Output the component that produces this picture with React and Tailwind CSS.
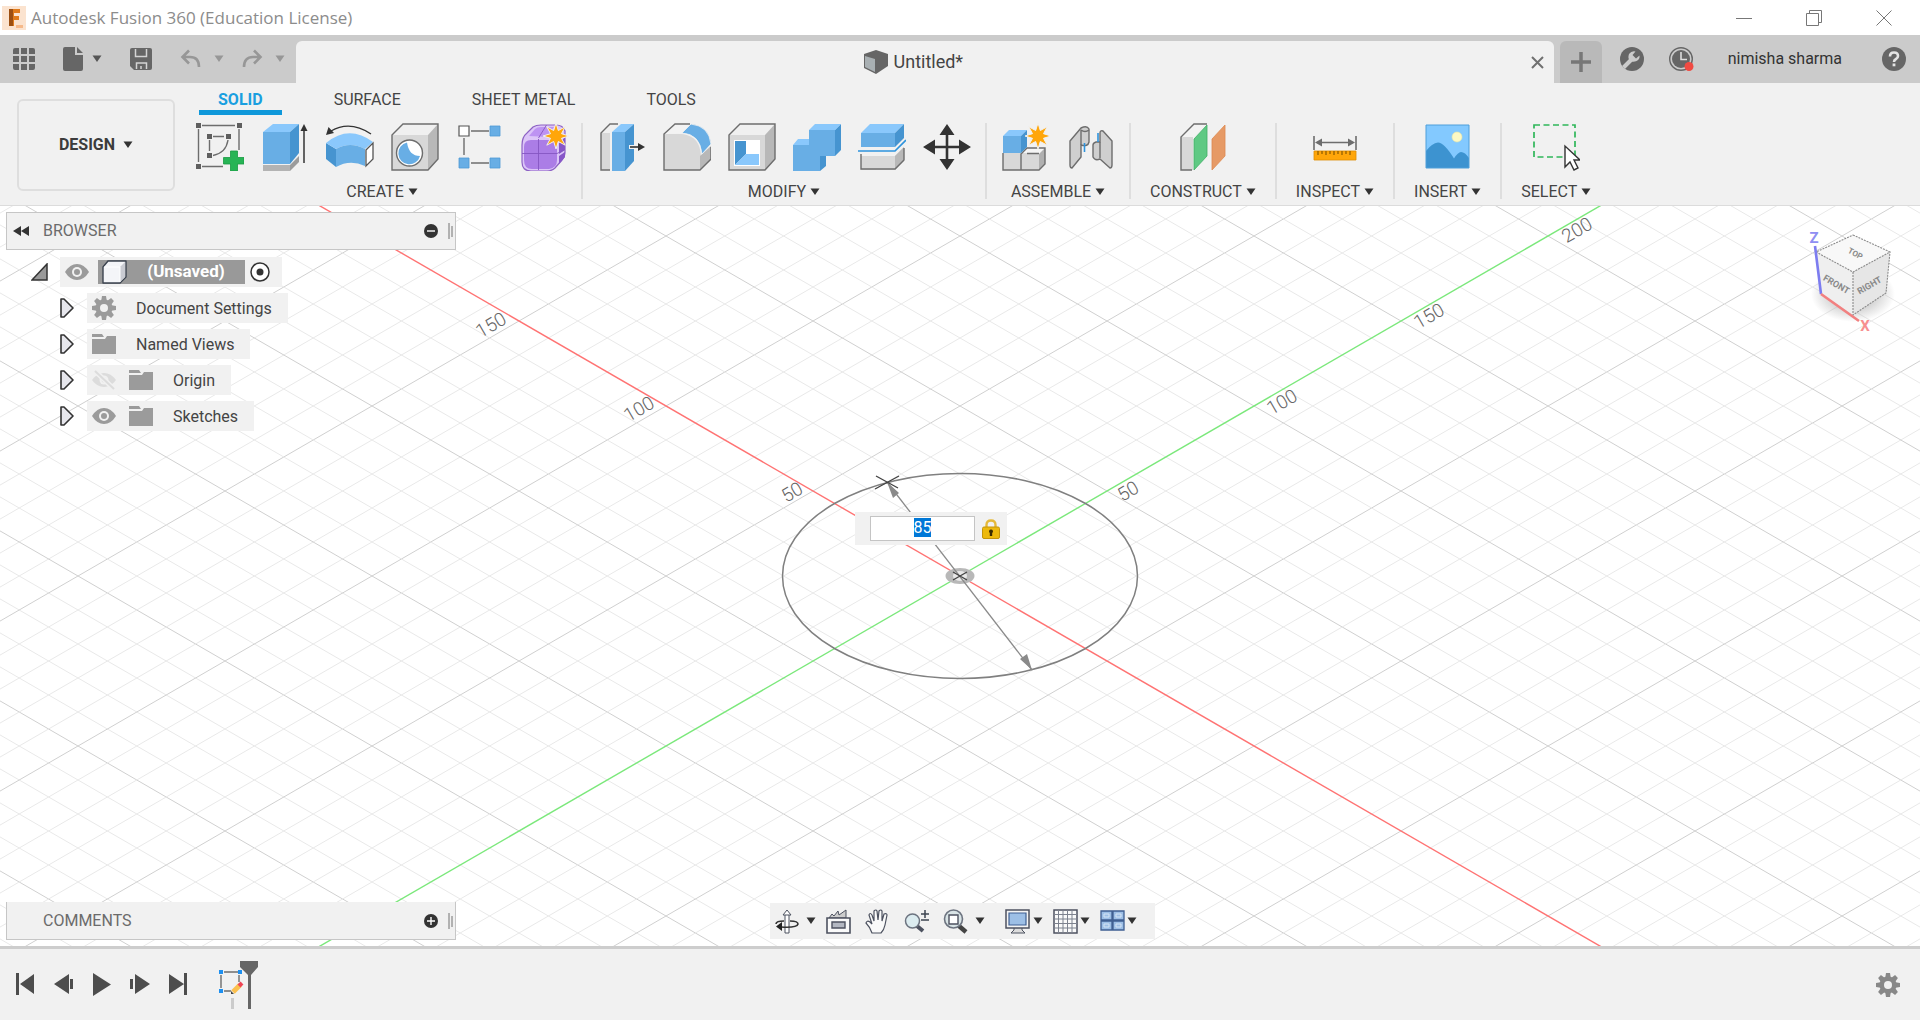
import { useEffect, useRef } from 'react';

const LIGHT = '#8ac8fc';
const MID = '#68aee5';
const DARK = '#4694d0';
const LINE = '#6d6d6d';

// ---------- small shared pieces ----------

function Caret({ className = 'text-[#333]' }) {
  return (
    <svg width="10" height="8" viewBox="0 0 10 8" className={className} aria-hidden="true">
      <path d="M0.500 0.500h9L5 7z" fill="currentColor" />
    </svg>
  );
}

function Art({ w = 48, h = 48, children }) {
  return (
    <svg width={w} height={h} viewBox={`0 0 ${w} ${h}`} fill="none" aria-hidden="true">
      {children}
    </svg>
  );
}

function starPoints(cx, cy, outer, inner) {
  const pts = [];
  for (let i = 0; i < 16; i++) {
    const r = i % 2 === 0 ? outer : inner;
    const a = (Math.PI / 8) * i - Math.PI / 2;
    pts.push(`${(cx + r * Math.cos(a)).toFixed(1)},${(cy + r * Math.sin(a)).toFixed(1)}`);
  }
  return pts.join(' ');
}

// ---------- ribbon icons ----------

function SketchIcon() {
  return (
    <Art>
      <g stroke={LINE} strokeWidth="1.4">
        <path d="M6 2.5h33M2.5 6v33M43 6v21M6 43.5h21M17 13.5h11M13.5 17v11M32 17Q30 30 17 32.500" />
      </g>
      <g fill="#5f5f5f">
        <path d="M0 0h5v5H0zM41 0h5v5h-5zM0 41h5v5H0zM11 11h5v5h-5zM30 11h5v5h-5zM11 30h5v5h-5z" />
      </g>
      <path d="M34.500 28h7v6.500H48v6.500h-6.500V48h-7v-7H27.500v-6.500h7z" fill="#27b455" stroke="#199a43" strokeWidth="0.8" />
    </Art>
  );
}

function ExtrudeIcon() {
  return (
    <Art>
      <path d="M2 42h27v6H2z" fill="#b3b3b3" />
      <path d="M29 42l9-9v6l-9 9z" fill="#9b9b9b" />
      <path d="M2 9L12 1h26l-9 8z" fill={LIGHT} />
      <path d="M2 9h27v32H2z" fill={MID} />
      <path d="M29 9l9-8v29l-9 11z" fill={DARK} />
      <path d="M43 40V6" stroke="#333" strokeWidth="1.5" />
      <path d="M43 1l3.500 7h-7z" fill="#333" />
    </Art>
  );
}

function RevolveIcon() {
  return (
    <Art>
      <path d="M45 11Q24-3 5 8" stroke="#333" strokeWidth="1.4" />
      <path d="M0 12L2.500 4l5.500 6z" fill="#333" />
      <path d="M0 20l10 6v18l-10-8z" fill={DARK} />
      <path d="M0 20Q23 1 47 19l-8 7Q24 18 10 26z" fill={LIGHT} />
      <path d="M10 26q14-8 29 0v17Q24 36 10 44z" fill={MID} />
      <path d="M40 27l7-7v16l-7 7z" fill="#fff" stroke="#555" strokeWidth="1.3" />
    </Art>
  );
}

function HoleIcon() {
  return (
    <Art>
      <path d="M1 12L12 1h35L37 12z" fill="#f0f0f0" />
      <path d="M1 12h36v35H1z" fill="#d8d8d8" />
      <path d="M37 12L47 1v35L37 47z" fill="#b8b8b8" />
      <path d="M1 12L12 1h35v35L37 47H1z" stroke={LINE} strokeWidth="1.4" />
      <circle cx="18.500" cy="30" r="13" fill="#fff" stroke={LINE} strokeWidth="1.4" />
      <path d="M16 19.500A11 11 0 1 0 29 33Q18 33 16 19.500z" fill={MID} />
    </Art>
  );
}

function PatternIcon() {
  return (
    <Art>
      <path d="M15 8h18M8 15v17M15 40h18" stroke={LINE} strokeWidth="1.4" />
      <path d="M3 3h10v10H3z" fill="#fff" stroke="#555" strokeWidth="1.2" />
      <path d="M34 3h10v10H34zM3 35h10v10H3zM34 35h10v10H34z" fill={MID} stroke="#4f9bd6" strokeWidth="0.8" />
    </Art>
  );
}

function FormIcon() {
  return (
    <Art>
      <path d="M1 22q0-8 5-12l6-6q3-2 8-2h15q7 0 9 6v22q0 4-3 7l-7 8q-3 3-8 3H10q-9 0-9-9z" fill="#dcc5f8" stroke="#8d62c4" strokeWidth="1.2" />
      <path d="M8 13l6-7q2-2 6-2h13l-6 10z" fill="#bd93f2" />
      <path d="M3 24q0-7 7-7h18q7 0 8 7v13q0 8-8 9H11q-8 0-8-9z" fill="#ab7de6" />
      <path d="M38 20l6-6v13l-6 4zM38 33l6-4v5l-6 7z" fill="#8757c8" />
      <path d="M1 30.500h35l8-4M17.500 16v31M17.500 15l8-13" stroke="#8456c2" strokeWidth="0.9" />
      <polygon points={starPoints(35, 13, 13, 6)} fill="#ffa60a" stroke="#f1f1f1" strokeWidth="1" />
    </Art>
  );
}

function PressPullIcon() {
  return (
    <Art>
      <path d="M3 10L12 1h11L13 10v37H3z" fill="#f0f0f0" />
      <path d="M3 10h9v37H3z" fill="#d8d8d8" />
      <path d="M20 1h-8L3 10v37h9" stroke={LINE} strokeWidth="1.4" />
      <path d="M14 9l9-8h13l-9 8z" fill={LIGHT} />
      <path d="M14 9h13v39H14z" fill={MID} />
      <path d="M27 9l9-8v37l-9 10z" fill={DARK} />
      <path d="M31 24h10" stroke="#f1f1f1" strokeWidth="4" />
      <path d="M32 24h9" stroke="#333" strokeWidth="1.6" />
      <path d="M47 24l-7-4v8z" fill="#333" />
    </Art>
  );
}

function FilletIcon() {
  return (
    <Art>
      <path d="M1 11L12 1h15l-8 9z" fill="#f3f3f3" />
      <path d="M1 11h18q18 2 19 22v14H1z" fill="#d8d8d8" />
      <path d="M37 33l11-10v14L37 47z" fill="#b8b8b8" />
      <path d="M27 1H12L1 11v36h36l11-11V24" stroke={LINE} strokeWidth="1.4" />
      <path d="M19 10l9-9q18 2 20 20l-9 10Q37 11 19 10z" fill={MID} stroke="#f1f1f1" strokeWidth="0.8" />
    </Art>
  );
}

function ShellIcon() {
  return (
    <Art>
      <path d="M1 12L12 1h35L37 12z" fill="#f0f0f0" />
      <path d="M1 12h36v35H1z" fill="#d8d8d8" />
      <path d="M37 12L47 1v35L37 47z" fill="#b8b8b8" />
      <path d="M1 12L12 1h35v35L37 47H1z" stroke={LINE} strokeWidth="1.4" />
      <path d="M6 17h26v26H6z" fill="#fff" />
      <path d="M7 18h11v13L7 42z" fill={DARK} />
      <path d="M18 31h13v11H7z" fill={LIGHT} />
    </Art>
  );
}

function CombineIcon() {
  return (
    <Art>
      <path d="M0 22l5-6h13L27 1h21l-6 6H16v15z" fill={LIGHT} />
      <path d="M0 22h16V7h26v26H27v15H0z" fill={MID} />
      <path d="M42 7l6-6v26l-6 6zM27 33h6v10l-6 5z" fill={DARK} />
      <path d="M16 7l6-6h26l-6 6z" fill={LIGHT} />
    </Art>
  );
}

function SplitIcon() {
  return (
    <Art>
      <path d="M3 33h34l9-9v14l-9 9H3z" fill="#d8d8d8" />
      <path d="M37 33l9-9v14l-9 9z" fill="#b8b8b8" />
      <path d="M3 31v15h34l9-9V25" stroke={LINE} strokeWidth="1.4" />
      <path d="M3 10l9-9h34l-9 9z" fill={LIGHT} />
      <path d="M3 10h34v14H3z" fill={MID} />
      <path d="M37 10l9-9v14l-9 9z" fill={DARK} />
      <path d="M0 28h37l11-11" stroke="#f1f1f1" strokeWidth="4" />
      <path d="M0 28h37l11-11" stroke="#2d93dd" strokeWidth="1.7" />
    </Art>
  );
}

function MoveIcon() {
  return (
    <Art>
      <path d="M24 6v36M6 24h36" stroke="#333" strokeWidth="2.6" />
      <path d="M24 1l7.500 11h-15zM24 47l7.500-11h-15zM0 24l12-7.500v15zM48 24l-12-7.500v15z" fill="#333" />
    </Art>
  );
}

function ComponentIcon() {
  return (
    <Art>
      <path d="M19 31l6-6h18l-6 6z" fill="#f5f5f5" />
      <path d="M1 30h36v17H1z" fill="#d8d8d8" />
      <path d="M37 31l6-6v16l-6 6z" fill="#b0b0b0" />
      <path d="M1 30v17h36l6-6V25H25l-6 6v16M25 30.500h12" stroke={LINE} strokeWidth="1.4" />
      <path d="M1 13l6-6h18l-6 6z" fill={LIGHT} />
      <path d="M1 13h18v17H1z" fill={MID} />
      <path d="M19 13l6-6v17l-6 6z" fill={DARK} />
      <polygon points={starPoints(36, 13, 13, 6)} fill="#ffa60a" stroke="#f1f1f1" strokeWidth="1" />
    </Art>
  );
}

function JointIcon() {
  return (
    <Art>
      <g stroke={LINE} strokeWidth="1.4" strokeLinejoin="round">
        <path d="M3 18L14 5q6-3 8 1v13q-1 5-8 3v12L5 45q-2 0-2-3z" fill="#cfcfcf" />
        <path d="M14 7v15M14 7q4 3 8 0" />
        <path d="M45 18L36 8q-3-1-3 2v9h-4q-3 1-3 3v12q2 4 7 2l10 9q2 0 2-3z" fill="#cfcfcf" />
        <path d="M33 19v16" />
      </g>
      <path d="M17.500 20v9M31 10v9" stroke="#2d93dd" strokeWidth="1.6" />
    </Art>
  );
}

function PlaneIcon() {
  return (
    <Art>
      <path d="M2 13L15 1h12L15 14v33H2z" fill="#f3f3f3" />
      <path d="M2 14h12v33H2z" fill="#d8d8d8" />
      <path d="M28 1H15L2 14v33h11" stroke={LINE} strokeWidth="1.4" />
      <path d="M15 16L28 2v31L15 47z" fill="#5fc983" stroke="#3fae66" strokeWidth="0.8" />
      <path d="M33 16L46 2v31L33 47z" fill="#e69a66" stroke="#dd8950" strokeWidth="0.8" />
    </Art>
  );
}

function MeasureIcon() {
  return (
    <Art>
      <path d="M3 13v14M45 13v14M6 19.500h36" stroke={LINE} strokeWidth="1.6" />
      <path d="M4 19.500l7-4v8zM44 19.500l-7-4v8z" fill={LINE} />
      <path d="M3 28h42v9H3z" fill="#ffa60a" stroke="#e08e00" strokeWidth="0.8" />
      <path d="M7 28v4M11 28v3M15 28v4M19 28v3M23 28v4M27 28v3M31 28v4M35 28v3M39 28v4" stroke="#8a5a00" strokeWidth="1.2" />
    </Art>
  );
}

function ImageIcon() {
  return (
    <Art>
      <path d="M2 2h43v43H2z" fill="#83c9ff" />
      <path d="M2 28Q8 20 14 19.500q6 0 16 16Q34 29 37 29q4 0 8 6v10H2z" fill="#3d93d0" />
      <circle cx="33" cy="14" r="5" fill="#fdf9c4" stroke="#e8e6a8" strokeWidth="0.6" />
      <path d="M2 2h43v43H2z" stroke="#4f9fda" strokeWidth="1" />
    </Art>
  );
}

function SelectIcon() {
  return (
    <Art>
      <path d="M2 2h41v32H2z" stroke="#2fb75a" strokeWidth="1.7" strokeDasharray="6 3.500" />
      <path d="M33 23v21l5-5 4 8 4-2-4-8h6z" fill="#fff" stroke="#333" strokeWidth="1.4" />
    </Art>
  );
}

// ---------- header ----------

function TitleBar() {
  return (
    <header className="flex h-[35px] shrink-0 items-center justify-between bg-white pl-[2px] pr-[28px]">
      <div className="flex items-center gap-[5px]">
        <svg width="24" height="24" viewBox="0 0 24 24" aria-hidden="true">
          <path d="M0 0h24v24H0z" fill="#fbe3cf" />
          <path d="M7 3h11v4h-6v3h5v4h-5v6H7z" fill="#e07b1c" />
          <path d="M7 3h4v17H7z" fill="#9c4f12" />
          <path d="M14 19h7v3h-7z" fill="#f5b98a" />
        </svg>
        <h1 className="font-['Open_Sans',sans-serif] text-[17px] leading-6 text-[#8c8c8c]">
          Autodesk Fusion 360 (Education License)
        </h1>
      </div>
      <div className="flex items-center gap-[54px] text-[#777]">
        <button aria-label="Minimize">
          <svg width="16" height="16" viewBox="0 0 16 16" stroke="currentColor"><path d="M0 8.500h16" /></svg>
        </button>
        <button aria-label="Restore">
          <svg width="16" height="16" viewBox="0 0 16 16" fill="none" stroke="currentColor">
            <path d="M.5 3.500h12v12H.5zM3.500 3.500v-3h12v12h-3" />
          </svg>
        </button>
        <button aria-label="Close">
          <svg width="16" height="16" viewBox="0 0 16 16" stroke="currentColor"><path d="M.5.5l15 15M15.500.5l-15 15" /></svg>
        </button>
      </div>
    </header>
  );
}

function TabStrip() {
  return (
    <div className="flex h-12 shrink-0 items-end bg-[#cbcbcb] pr-[14px]">
      <div className="flex h-12 w-[296px] shrink-0 items-center pl-[13px] text-[#666]">
        <button aria-label="Data panel">
          <svg width="22" height="22" viewBox="0 0 22 22" fill="currentColor" aria-hidden="true">
            <path d="M2 0h4v6H0V2q0-2 2-2zM8 0h6v6H8zM16 0h4q2 0 2 2v4h-6zM0 8h6v6H0zM8 8h6v6H8zM16 8h6v6h-6zM0 16h6v6H2q-2 0-2-2zM8 16h6v6H8zM16 16h6v4q0 2-2 2h-4z" />
          </svg>
        </button>
        <button aria-label="File" className="ml-7 flex items-center gap-[9px]">
          <svg width="20" height="24" viewBox="0 0 20 24" fill="currentColor" aria-hidden="true">
            <path d="M2 0h10v8h8v14q0 2-2 2H2q-2 0-2-2V2q0-2 2-2zM14 0l6 6h-6z" />
          </svg>
          <Caret className="text-[#555]" />
        </button>
        <button aria-label="Save" className="ml-7">
          <svg width="22" height="22" viewBox="0 0 22 22" aria-hidden="true">
            <path d="M2 0h18q2 0 2 2v18q0 2-2 2H4l-4-4V2q0-2 2-2z" fill="currentColor" />
            <path d="M5.500 1v7.500h11V1M6.500 21v-6h10v6M11 18v3" fill="none" stroke="#d4d4d4" strokeWidth="1.500" />
          </svg>
        </button>
        <button aria-label="Undo" className="ml-7 flex items-center gap-[13px] text-[#979797]">
          <svg width="21" height="20" viewBox="0 0 21 20" fill="none" stroke="currentColor" strokeWidth="2.600" aria-hidden="true">
            <path d="M9 1.500L2.500 8 9 14.500M3 8h7q9 0 9 10" />
          </svg>
          <Caret className="text-[#979797]" />
        </button>
        <button aria-label="Redo" className="ml-[18px] flex items-center gap-3 text-[#979797]">
          <svg width="21" height="20" viewBox="0 0 21 20" fill="none" stroke="currentColor" strokeWidth="2.600" aria-hidden="true">
            <path d="M12 1.500L18.500 8 12 14.500M18 8h-7Q2 8 2 18" />
          </svg>
          <Caret className="text-[#979797]" />
        </button>
      </div>
      <div className="flex h-[42px] flex-1 items-center rounded-t-md bg-[#f1f1f1] pr-[10px]">
        <div className="flex flex-1 items-center justify-center gap-[6px]">
          <svg width="24" height="24" viewBox="0 0 24 24" aria-hidden="true">
            <path d="M0 4l12-4 12 4v12l-12 8L0 18z" fill="#666" />
            <path d="M1 6l10 3v13L1 17z" fill="#a9b0b3" />
          </svg>
          <span className="text-lg text-[#444]">Untitled*</span>
        </div>
        <button aria-label="Close tab" className="text-[#707070]">
          <svg width="13" height="13" viewBox="0 0 13 13" stroke="currentColor" strokeWidth="2"><path d="M1 1l11 11M12 1L1 12" /></svg>
        </button>
      </div>
      <button aria-label="New tab" className="ml-[6px] flex h-[42px] w-[42px] items-center justify-center rounded-t-md bg-[#b9b9b9] text-[#777]">
        <svg width="20" height="20" viewBox="0 0 20 20" stroke="currentColor" strokeWidth="3.500"><path d="M10 0v20M0 10h20" /></svg>
      </button>
      <div className="flex h-12 items-center pl-[18px]">
        <button aria-label="Extensions">
          <svg width="24" height="24" viewBox="0 0 24 24" aria-hidden="true">
            <circle cx="12" cy="12" r="12" fill="#666" />
            <path d="M3.500 20.500l8-8" stroke="#cbcbcb" strokeWidth="4" />
            <path d="M19.500 8.500L16 11.500l-3.500-3.500L15.500 4.500q-4-1-6.500 2.500-1.500 4 .8 6.800 3.200 1.800 6.800 .2 3.500-2 2.900-5.500z" fill="#cbcbcb" />
          </svg>
        </button>
        <button aria-label="Job status" className="ml-[25px]">
          <svg width="25" height="24" viewBox="0 0 25 24" aria-hidden="true">
            <circle cx="12" cy="12" r="11.300" fill="none" stroke="#666" strokeWidth="1.400" />
            <circle cx="12" cy="12" r="9" fill="#666" />
            <path d="M12 5v7.500h6" fill="none" stroke="#ddd" strokeWidth="1.600" />
            <circle cx="20" cy="19.500" r="4.500" fill="#f04a42" />
          </svg>
        </button>
        <button className="ml-[34px] text-base leading-5 text-[#333]">nimisha sharma</button>
        <button aria-label="Help" className="ml-10">
          <svg width="24" height="24" viewBox="0 0 24 24" aria-hidden="true">
            <circle cx="12" cy="12" r="12" fill="#666" />
            <path d="M8 9.500q0-4 4-4t4 3.500q0 2-2 3t-2 3" fill="none" stroke="#e4e4e4" strokeWidth="2.600" />
            <path d="M10.600 16.500h2.800v2.800h-2.800z" fill="#e4e4e4" />
          </svg>
        </button>
      </div>
    </div>
  );
}

// ---------- ribbon ----------

const ribbonTabs = ['SOLID', 'SURFACE', 'SHEET METAL', 'TOOLS'];

const groups = [
  {
    label: 'CREATE',
    tools: [
      ['Create Sketch', SketchIcon],
      ['Extrude', ExtrudeIcon],
      ['Revolve', RevolveIcon],
      ['Hole', HoleIcon],
      ['Pattern', PatternIcon],
      ['Create Form', FormIcon],
    ],
  },
  {
    label: 'MODIFY',
    tools: [
      ['Press Pull', PressPullIcon],
      ['Fillet', FilletIcon],
      ['Shell', ShellIcon],
      ['Combine', CombineIcon],
      ['Split Body', SplitIcon],
      ['Move', MoveIcon],
    ],
  },
  {
    label: 'ASSEMBLE',
    tools: [
      ['New Component', ComponentIcon],
      ['Joint', JointIcon],
    ],
  },
  { label: 'CONSTRUCT', tools: [['Offset Plane', PlaneIcon]] },
  { label: 'INSPECT', tools: [['Measure', MeasureIcon]] },
  { label: 'INSERT', tools: [['Insert Image', ImageIcon]] },
  { label: 'SELECT', tools: [['Select', SelectIcon]] },
];

function RibbonGroup({ label, tools }) {
  const single = tools.length === 1;
  return (
    <section
      aria-label={label}
      className={`flex h-[76px] flex-col items-center border-r-2 border-[#dedede] last:border-r-0 ${single ? 'px-[19px]' : 'px-[6px] first:pr-1 first:pl-0'}`}
    >
      <div className="flex">
        {tools.map(([name, Icon]) => (
          <button key={name} aria-label={name} className="flex h-12 w-[65px] items-center justify-center">
            <Icon />
          </button>
        ))}
      </div>
      <button className="mt-[11px] flex items-center gap-1 text-base leading-5 text-[#444]">
        {label}
        <Caret />
      </button>
    </section>
  );
}

function Ribbon() {
  return (
    <div className="flex shrink-0 items-start border-b border-[#dcdcdc] bg-[#f1f1f1] pl-[17px]">
      <button className="mt-4 flex h-[92px] w-[158px] shrink-0 items-center justify-center gap-2 rounded-md border-2 border-[#dedede] text-base font-bold text-[#3c3c3c]">
        DESIGN
        <Caret />
      </button>
      <div className="ml-3">
        <nav className="flex gap-[33px] pl-3">
          {ribbonTabs.map((tab, i) => (
            <button
              key={tab}
              className={`border-b-[5px] px-[19px] pt-[7px] text-base leading-5 ${
                i === 0 ? 'border-[#0f98da] font-bold text-[#1a9fe0]' : 'border-transparent text-[#444]'
              }`}
            >
              {tab}
            </button>
          ))}
        </nav>
        <div className="mt-2 mb-[6px] flex">
          {groups.map((g) => (
            <RibbonGroup key={g.label} {...g} />
          ))}
        </div>
      </div>
    </div>
  );
}

// ---------- modelling canvas ----------

// one 10 mm cell of the isometric floor, in screen units
const CELL_X = 29.4;
const CELL_Y = 17;

function GridLines() {
  const lines = [];
  for (let i = -56; i <= 56; i++) {
    if (i === 0) continue;
    const stroke = i % 5 === 0 ? '#d0d0d0' : '#e9e9e9';
    const x = i * CELL_X;
    const y = i * CELL_Y;
    lines.push(
      <line key={`a${i}`} x1={x - 60 * CELL_X} y1={-y - 60 * CELL_Y} x2={x + 60 * CELL_X} y2={-y + 60 * CELL_Y} stroke={stroke} />,
      <line key={`b${i}`} x1={x - 60 * CELL_X} y1={y + 60 * CELL_Y} x2={x + 60 * CELL_X} y2={y - 60 * CELL_Y} stroke={stroke} />,
    );
  }
  return <g strokeWidth="1">{lines}</g>;
}

const axisLabels = [
  [168, -85, '50'],
  [322, -174, '100'],
  [469, -260, '150'],
  [617, -346, '200'],
  [-168, -84, '50'],
  [-321, -167, '100'],
  [-469, -251, '150'],
];

function Floor() {
  return (
    <svg
      className="absolute inset-0 h-full w-full"
      viewBox="-960 -370 1920 740"
      preserveAspectRatio="xMidYMid slice"
      aria-hidden="true"
    >
      <GridLines />
      <line x1="-1176" y1="-680" x2="1176" y2="680" stroke="#ff7373" strokeWidth="1.400" />
      <line x1="-1176" y1="680" x2="1176" y2="-680" stroke="#7be87b" strokeWidth="1.400" />
      <g className="font-light" fontSize="19" fill="#666" textAnchor="middle">
        {axisLabels.map(([x, y, text]) => (
          <text key={`${x}`} transform={`translate(${x} ${y}) rotate(-30)`} dominantBaseline="central">
            {text}
          </text>
        ))}
      </g>
      <ellipse cx="0" cy="0" rx="177.500" ry="102.500" fill="none" stroke="#808080" strokeWidth="1.500" />
      <ellipse cx="0" cy="0" rx="14.500" ry="8" fill="#b8b8b8" />
      <ellipse cx="0" cy="0" rx="7" ry="5" fill="#e9e9e9" />
      <path d="M-73-94L72 94" stroke="#8a8a8a" strokeWidth="1.300" />
      <path d="M-73-94l12 11-6 5zM72 94L60 83l7-5z" fill="#8a8a8a" />
      <path d="M-84-100l22 12M-61-100l-24 13M-7-4L7 4M-7 4L7-4" stroke="#444" strokeWidth="1.400" />
    </svg>
  );
}

function DimensionInput() {
  const ref = useRef(null);

  useEffect(() => {
    ref.current.focus();
    ref.current.select();
  }, []);

  return (
    <div className="absolute top-1/2 left-1/2 -mt-16 -ml-[105px] flex items-center gap-[7px] bg-[#f1f1f1] py-1 pr-[7px] pl-[15px]">
      <input
        ref={ref}
        aria-label="Diameter"
        defaultValue="85"
        className="h-[25px] w-[105px] border border-[#c4c4c4] bg-white pb-[2px] text-center text-base text-[#333] outline-none selection:bg-[#0078d7] selection:text-white"
      />
      <svg width="18" height="20" viewBox="0 0 18 20" aria-hidden="true">
        <path d="M4.500 9V6q0-4.500 4.500-4.500T13.500 6v3" fill="none" stroke="#e5b93a" strokeWidth="2.400" />
        <rect x="0.500" y="8" width="17" height="11.500" rx="1.500" fill="#edb90c" stroke="#c4950a" />
        <path d="M9 10.500a2 2 0 0 1 1.200 3.600V17H7.800v-2.900A2 2 0 0 1 9 10.500z" fill="#3a2b00" />
      </svg>
    </div>
  );
}

function ViewCube() {
  return (
    <svg className="absolute top-4 right-5 h-[124px] w-[100px]" viewBox="0 0 100 124" aria-label="View cube">
      <defs>
        <radialGradient id="cubeShadow">
          <stop offset="0.400" stopColor="#999" stopOpacity="0.550" />
          <stop offset="1" stopColor="#999" stopOpacity="0" />
        </radialGradient>
      </defs>
      <ellipse cx="53" cy="72" rx="42" ry="28" fill="url(#cubeShadow)" />
      <path d="M53 13l37 17-37 20-37-20z" fill="#f8f8f8" />
      <path d="M16 30l37 20v43L21 72z" fill="#efefef" />
      <path d="M90 30L53 50v43l33-22z" fill="#e6e6e6" />
      <path d="M53 13l37 17-37 20-37-20zM53 50v43l33-22 4-41" fill="none" stroke="#8a8a8a" strokeWidth="1.100" strokeDasharray="2 1" />
      <path d="M15 24l6 48" stroke="#7c7cf0" strokeWidth="2.600" />
      <path d="M21 72l38 27" stroke="#f28080" strokeWidth="2.600" />
      <g fontWeight="bold" fill="#8a8a8a" textAnchor="middle">
        <text fontSize="8" transform="translate(54 34) rotate(28)">TOP</text>
        <text fontSize="9" transform="translate(35 65) rotate(30)">FRONT</text>
        <text fontSize="9" transform="translate(71 66) rotate(-30)">RIGHT</text>
      </g>
      <text x="14" y="21" fontSize="15" fontWeight="bold" fill="#8f8ff2" textAnchor="middle">Z</text>
      <text x="65" y="109" fontSize="15" fontWeight="bold" fill="#f78f8f" textAnchor="middle">X</text>
    </svg>
  );
}

// ---------- browser tree ----------

function EyeIcon() {
  return (
    <svg width="24" height="16" viewBox="0 0 24 16" aria-hidden="true">
      <path d="M0 8Q5 0 12 0t12 8q-5 8-12 8T0 8z" fill="#9b9b9b" />
      <circle cx="12" cy="8" r="5" fill="#f1f1f1" />
      <circle cx="12" cy="8" r="3" fill="#9b9b9b" />
    </svg>
  );
}

function HiddenEyeIcon() {
  return (
    <svg width="24" height="20" viewBox="0 0 24 20" aria-hidden="true">
      <path d="M0 10Q5 3 12 3t12 7q-5 7-12 7T0 10z" fill="#dcdcdc" />
      <circle cx="12" cy="10" r="4.500" fill="#f1f1f1" />
      <circle cx="12" cy="10" r="2.500" fill="#dcdcdc" />
      <path d="M3 1l19 18" stroke="#f1f1f1" strokeWidth="5" />
      <path d="M3 1l19 18" stroke="#dcdcdc" strokeWidth="2" />
    </svg>
  );
}

function FolderIcon() {
  return (
    <svg width="24" height="20" viewBox="0 0 24 20" aria-hidden="true">
      <path d="M0 0h10l2 3H0zM0 5h13l2-3h9v18H0z" fill="#9b9b9b" />
    </svg>
  );
}

function GearIcon({ color = '#9b9b9b' }) {
  return (
    <svg width="24" height="24" viewBox="0 0 24 24" aria-hidden="true">
      <g fill={color}>
        {[0, 45, 90, 135].map((deg) => (
          <path key={deg} d="M10 0h4l1 6v12l-1 6h-4l-1-6V6z" transform={`rotate(${deg} 12 12)`} />
        ))}
        <circle cx="12" cy="12" r="8.500" />
      </g>
      <circle cx="12" cy="12" r="4" fill="#f1f1f1" />
    </svg>
  );
}

function ExpandIcon() {
  return (
    <svg width="14" height="20" viewBox="0 0 14 20" aria-hidden="true">
      <path d="M1 1h3l9 9-9 9H1z" fill="#e6e6ec" stroke="#333" strokeWidth="1.600" strokeLinejoin="round" />
    </svg>
  );
}

const treeRows = [
  { name: 'Document Settings', icons: [GearIcon] },
  { name: 'Named Views', icons: [FolderIcon] },
  { name: 'Origin', icons: [HiddenEyeIcon, FolderIcon] },
  { name: 'Sketches', icons: [EyeIcon, FolderIcon] },
];

function PanelHeader({ title, lead, sign, className }) {
  return (
    <div className={`flex h-[38px] items-center border-[#c6c6c6] bg-[#f1f1f1] pr-[2px] pl-[6px] ${className}`}>
      <span className="flex w-[30px]">{lead}</span>
      <h2 className="flex-1 text-base leading-5 text-[#6b6b6b]">{title}</h2>
      <button aria-label={`Toggle ${title.toLowerCase()}`}>
        <svg width="14" height="14" viewBox="0 0 14 14" aria-hidden="true">
          <circle cx="7" cy="7" r="7" fill="#333" />
          <path d={sign} stroke="#fff" strokeWidth="1.400" />
        </svg>
      </button>
      <svg className="ml-[10px]" width="5" height="18" viewBox="0 0 5 18" aria-hidden="true">
        <path d="M1 1v16M4 4v11" stroke="#888" strokeWidth="1.200" />
      </svg>
    </div>
  );
}

function Browser() {
  return (
    <aside className="absolute top-[6px] left-[6px] w-[450px]">
      <PanelHeader
        title="BROWSER"
        className="border"
        sign="M3 7h8"
        lead={
          <svg width="16" height="10" viewBox="0 0 16 10" aria-hidden="true">
            <path d="M8 0v10L0 5zM16 0v10L8 5z" fill="#333" />
          </svg>
        }
      />
      <ul className="mt-[7px] flex flex-col gap-[6px]">
        <li className="flex h-[30px] items-center gap-3 pl-[25px]">
          <svg width="17" height="18" viewBox="0 0 17 18" aria-hidden="true">
            <path d="M1 17L16 1v16z" fill="#999" stroke="#333" strokeWidth="1.500" />
          </svg>
          <div className="flex h-[30px] items-center bg-[#f1f1f1] pr-3 pl-[5px]">
            <EyeIcon />
            <button className="mr-[5px] ml-[9px] flex h-6 w-[147px] items-center bg-[#999] pl-1 text-[17px] font-bold text-white">
              <svg width="25" height="24" viewBox="0 0 25 24" aria-hidden="true">
                <path d="M1 7l5-6h18v16l-6 6H1z" fill="#f4f5f8" stroke="#3d4450" strokeWidth="1.400" strokeLinejoin="round" />
                <path d="M18 7l5-5v15l-5 5z" fill="#c9cbd2" />
                <path d="M2 7h16v15" fill="none" stroke="#fff" />
              </svg>
              <span className="flex-1 text-center">(Unsaved)</span>
            </button>
            <svg width="20" height="20" viewBox="0 0 20 20" aria-hidden="true">
              <circle cx="10" cy="10" r="9" fill="#fff" stroke="#333" strokeWidth="1.500" />
              <circle cx="10" cy="10" r="3.500" fill="#333" />
            </svg>
          </div>
        </li>
        {treeRows.map(({ name, icons }) => (
          <li key={name} className="flex h-[30px] items-center pl-[54px]">
            <button aria-label={`Expand ${name}`}>
              <ExpandIcon />
            </button>
            <div className="ml-[13px] flex h-[30px] items-center gap-[13px] bg-[#f1f1f1] pr-4 pl-[5px]">
              {icons.map((Icon, i) => (
                <Icon key={i} />
              ))}
              <span className="pt-px pl-[7px] text-base text-[#444]">{name}</span>
            </div>
          </li>
        ))}
      </ul>
    </aside>
  );
}

// ---------- navigation bar ----------

const navTools = [
  {
    name: 'Orbit',
    menu: 'ml-[7px]',
    art: (
      <>
        <path d="M11 5h4v19h-4z" fill="#fff" stroke="#4d5260" />
        <path d="M9 6l4-5 4 5z" stroke="#4d5260" fill="#fff" />
        <path d="M10 12Q2 12 2 15M16 12q8 0 8 3-1 4-17 3" fill="none" stroke="#333" strokeWidth="1.600" />
        <path d="M8 13v9l-6-4.500z" fill="#222" />
      </>
    ),
  },
  {
    name: 'Look At',
    gap: 'mr-1',
    art: (
      <>
        <path d="M3 9l3-4 2 2 4-5 1 4 7-5v8z" fill="#ccc" stroke="#4d5260" />
        <path d="M1 9h23v15H1z" fill="#fafafa" stroke="#4d5260" strokeWidth="1.600" />
        <path d="M6 13h13v6H6z" fill="#b4b8c2" stroke="#4d5260" strokeWidth="1.400" />
      </>
    ),
  },
  {
    name: 'Pan',
    gap: 'mr-1',
    art: (
      <path
        d="M7 24Q5 18 1 14q1-3 4-1l2 2-3-9q1-3 3 0l2 6V2q2-2 3 0l1 9 1-9q2-2 3 0v10l2-7q3-1 3 1l-2 10q-1 5-4 8z"
        fill="#fafafa"
        stroke="#4d5260"
        strokeWidth="1.200"
      />
    ),
  },
  {
    name: 'Zoom',
    gap: 'mr-1',
    art: (
      <>
        <path d="M13 17l6 5" stroke="#4d5260" strokeWidth="4" />
        <circle cx="8.500" cy="12" r="7" fill="#dcecf0" stroke="#6d7480" strokeWidth="1.500" />
        <path d="M17 5h8M21 1v8M17 11h8" stroke="#3d4450" strokeWidth="1.500" />
      </>
    ),
  },
  {
    name: 'Fit',
    menu: 'ml-[7px]',
    gap: 'mr-[10px]',
    art: (
      <>
        <path d="M16 17l7 6" stroke="#444" strokeWidth="4.500" />
        <circle cx="10.500" cy="10" r="9" fill="#d9e4e6" stroke="#6d7480" strokeWidth="1.600" />
        <path d="M6 6h9v9H6z" fill="#fff" stroke="#4d5260" strokeWidth="1.400" />
      </>
    ),
  },
  {
    name: 'Display Settings',
    menu: 'ml-[3px]',
    art: (
      <>
        <path d="M9 18h8v3l3 3H6l3-3z" fill="#ddd" stroke="#4d5260" />
        <path d="M1 1h23v18H1z" fill="#f4f4f4" stroke="#4d5260" strokeWidth="1.500" />
        <path d="M4 4h17v12H4z" fill="#9dbfe6" stroke="#3f5f92" strokeWidth="1.200" />
      </>
    ),
  },
  {
    name: 'Grid and Snaps',
    menu: 'ml-[2px]',
    art: (
      <>
        <path d="M1 1h23v23H1z" fill="#fafafa" stroke="#4d5260" strokeWidth="1.500" />
        <path d="M5.500 1v23M10 1v23M14.500 1v23M19 1v23M1 5.500h23M1 10h23M1 14.500h23M1 19h23" stroke="#7d828e" />
      </>
    ),
  },
  {
    name: 'Viewports',
    menu: 'ml-[2px]',
    art: (
      <>
        <path d="M1 2h11v9H1zM13 2h11v9H13zM1 12h11v9H1zM13 12h11v9H13z" fill="#9dbfe6" stroke="#3f5f92" strokeWidth="1.300" />
        <path d="M4 5h5v3H4zM16 5h5v3h-5zM4 15h5v3H4zM16 15h5v3h-5z" stroke="#d5e4f5" fill="none" />
      </>
    ),
  },
];

function NavBar() {
  return (
    <div className="absolute bottom-[7px] left-1/2 -ml-[190px] flex h-9 items-center gap-[10px] bg-[#f1f1f1] pr-[18px] pl-1">
      {navTools.map(({ name, menu, gap = '', art }) => (
        <button key={name} aria-label={name} className={`flex items-center ${gap}`}>
          <svg width="25" height="25" viewBox="0 0 25 25" aria-hidden="true">{art}</svg>
          {menu && (
            <span className={menu}>
              <Caret />
            </span>
          )}
        </button>
      ))}
    </div>
  );
}

// ---------- timeline ----------

const playback = [
  ['Go to start', 'M0 0h3v22H0zM18 1v20L4 11z'],
  ['Step back', 'M15 1v20L0 11zM16 6h3v10h-3z'],
  ['Play', 'M1 0l18 11.500L1 23z'],
  ['Step forward', 'M0 6h3v10H0zM5 1v20l15-10z'],
  ['Go to end', 'M1 1v20l15-10zM16 0h3v22h-3z'],
];

function Timeline() {
  return (
    <footer className="flex h-[74px] shrink-0 items-center border-t-[3px] border-[#cdcdcd] bg-[#f1f1f1] pr-5 pl-4">
      <div className="flex gap-[18px]">
        {playback.map(([name, d]) => (
          <button key={name} aria-label={name}>
            <svg width="20" height="23" viewBox="0 0 20 23" fill="#4d4d4d" aria-hidden="true">
              <path d={d} />
            </svg>
          </button>
        ))}
      </div>
      <button aria-label="Sketch1" className="ml-[30px]">
        <svg width="42" height="50" viewBox="0 0 42 50" fill="none" aria-hidden="true">
          <path d="M6 12h14M3 15v13M21 15v7M6 31h7" stroke={LINE} strokeWidth="1.400" />
          <path d="M1 10h4v4H1zM20 10h4v4h-4zM1 29h4v4H1z" fill="#1e90f0" />
          <path d="M15 32l7-7" stroke="#fbc04e" strokeWidth="5" />
          <path d="M21 26l3-3" stroke="#ef4455" strokeWidth="4" />
          <path d="M13 31l3 3h-3z" fill="#444" />
          <path d="M13 38h3v11h-3z" fill="#cbcbcb" />
          <path d="M22 1h18v6l-7 8v34h-3V15l-8-8z" fill="#666" />
        </svg>
      </button>
      <button aria-label="Timeline settings" className="ml-auto">
        <GearIcon color="#888" />
      </button>
    </footer>
  );
}

export default function App() {
  return (
    <div className="flex h-screen min-h-[600px] flex-col overflow-hidden bg-white font-[Roboto,'Liberation_Sans',sans-serif]">
      <TitleBar />
      <TabStrip />
      <Ribbon />
      <main className="relative flex-1 overflow-hidden bg-white">
        <Floor />
        <DimensionInput />
        <ViewCube />
        <Browser />
        <PanelHeader
          title="COMMENTS"
          className="absolute bottom-[6px] left-[6px] w-[450px] border border-t-0"
          sign="M3 7h8M7 3v8"
        />
        <NavBar />
      </main>
      <Timeline />
    </div>
  );
}
